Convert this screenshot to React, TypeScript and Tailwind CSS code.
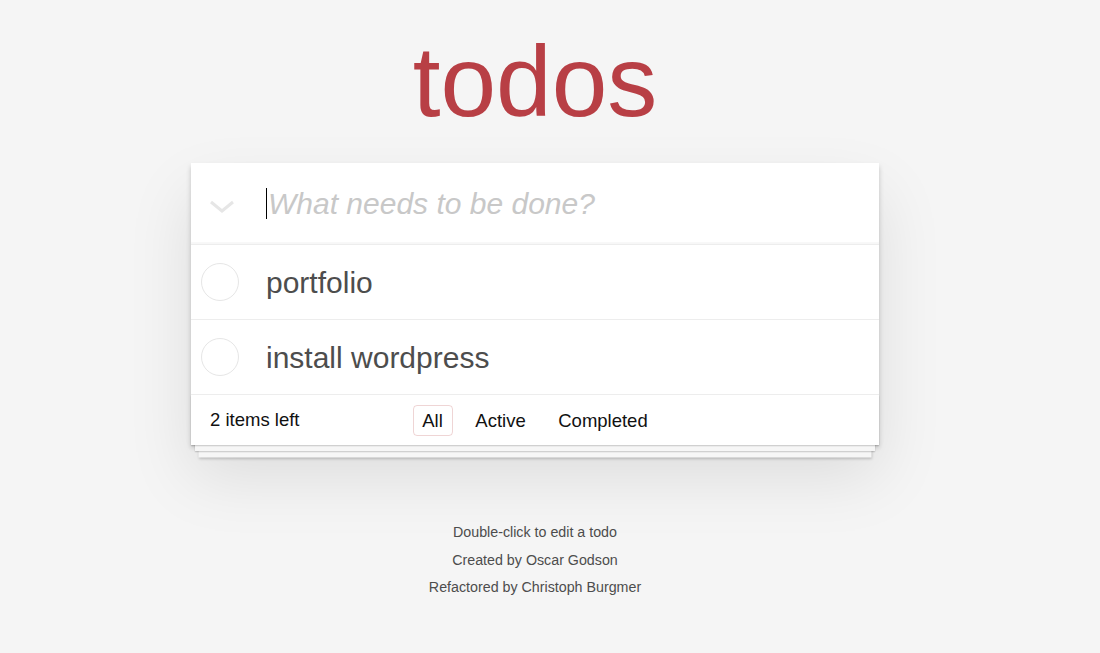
const todos = ["portfolio", "install wordpress"];

function Chevron() {
  return (
    <svg width="26" height="14" viewBox="0 0 26 14" fill="none">
      <path d="M2 2 L13 11 L24 2" stroke="#e6e6e6" strokeWidth="3" />
    </svg>
  );
}

export default function App() {
  return (
    <div
      className="min-h-[653px] w-full bg-[#f5f5f5] text-[#4d4d4d]"
      style={{ fontFamily: '"Liberation Sans", Helvetica, Arial, sans-serif' }}
    >
      <div className="flex w-[1070px] flex-col items-center pt-[31px]">
        <h1 className="text-[100px] leading-none text-[#b83f45]">todos</h1>

        <section className="relative mt-[32px] w-[688px] bg-white shadow-[0_2.5px_5px_rgba(0,0,0,0.2),0_31px_62px_rgba(0,0,0,0.1)]">
          <header className="flex h-[82px] items-center border-b border-[#ededed] shadow-[inset_0_-2px_1px_rgba(0,0,0,0.03)]">
            <div className="flex w-[75px] justify-start pl-[18px] pt-[6px]">
              <Chevron />
            </div>
            <span className="h-[31px] w-px bg-black" />
            <span className="ml-[1px] text-[30px] italic text-[#c8c8c8]">What needs to be done?</span>
          </header>

          <ul>
            {todos.map((t) => (
              <li key={t} className="flex h-[75px] items-center border-b border-[#ededed]">
                <div className="flex w-[75px] items-center pl-[10px]">
                  <span className="h-[38px] w-[38px] rounded-full border border-[#e6e6e6]" />
                </div>
                <span className="text-[30px] text-[#4d4d4d]">{t}</span>
              </li>
            ))}
          </ul>

          <footer className="relative grid h-[50px] grid-cols-[1fr_auto_1fr] items-center px-[19px] text-[18.5px] text-[#111]">
            <div className="pointer-events-none absolute inset-0 shadow-[0_1.25px_1.25px_rgba(0,0,0,0.2),0_10px_0_-4px_#f6f6f6,0_11px_1.25px_-4px_rgba(0,0,0,0.2),0_20px_0_-7.5px_#f6f6f6,0_21px_2.5px_-7.5px_rgba(0,0,0,0.2)]" />
            <span className="relative bg-white">2 items left</span>
            <div className="relative flex items-center gap-[13px] bg-white">
              <a className="rounded-[4px] border border-[rgba(175,47,47,0.2)] px-[8.75px] pb-[3px] pt-[3px] leading-[23px]">All</a>
              <a className="rounded-[4px] border border-transparent px-[8.75px] pb-[3px] pt-[3px] leading-[23px]">Active</a>
              <a className="rounded-[4px] border border-transparent px-[8.75px] pb-[3px] pt-[3px] leading-[23px]">Completed</a>
            </div>
            <span />
          </footer>
        </section>

        <div className="mt-[74px] flex flex-col items-center text-[14.25px] leading-[27.5px] text-[#4d4d4d]">
          <p>Double-click to edit a todo</p>
          <p>Created by Oscar Godson</p>
          <p>Refactored by Christoph Burgmer</p>
        </div>
      </div>
    </div>
  );
}
